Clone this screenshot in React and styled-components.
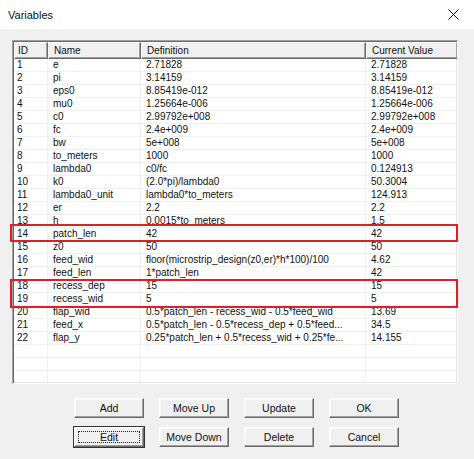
import React from 'react';
import styled, { createGlobalStyle } from 'styled-components';

const GlobalStyle = createGlobalStyle`
  html, body {
    margin: 0;
    padding: 0;
    background: #f0f0f0;
  }
`;

const ROW_H = 13;
const HEADER_H = 17;

const variables = [
  ['1', 'e', '2.71828', '2.71828'],
  ['2', 'pi', '3.14159', '3.14159'],
  ['3', 'eps0', '8.85419e-012', '8.85419e-012'],
  ['4', 'mu0', '1.25664e-006', '1.25664e-006'],
  ['5', 'c0', '2.99792e+008', '2.99792e+008'],
  ['6', 'fc', '2.4e+009', '2.4e+009'],
  ['7', 'bw', '5e+008', '5e+008'],
  ['8', 'to_meters', '1000', '1000'],
  ['9', 'lambda0', 'c0/fc', '0.124913'],
  ['10', 'k0', '(2.0*pi)/lambda0', '50.3004'],
  ['11', 'lambda0_unit', 'lambda0*to_meters', '124.913'],
  ['12', 'er', '2.2', '2.2'],
  ['13', 'h', '0.0015*to_meters', '1.5'],
  ['14', 'patch_len', '42', '42'],
  ['15', 'z0', '50', '50'],
  ['16', 'feed_wid', 'floor(microstrip_design(z0,er)*h*100)/100', '4.62'],
  ['17', 'feed_len', '1*patch_len', '42'],
  ['18', 'recess_dep', '15', '15'],
  ['19', 'recess_wid', '5', '5'],
  ['20', 'flap_wid', '0.5*patch_len - recess_wid - 0.5*feed_wid', '13.69'],
  ['21', 'feed_x', '0.5*patch_len - 0.5*recess_dep + 0.5*feed...', '34.5'],
  ['22', 'flap_y', '0.25*patch_len + 0.5*recess_wid + 0.25*fe...', '14.155'],
];

const EMPTY_ROWS = 3;

// red marks drawn over the list: first row, row count, fine offsets
const highlights = [
  { first: 14, count: 1, dy: -4, dh: 5 },
  { first: 18, count: 2, dy: -1, dh: 3 },
];

const columns = ['ID', 'Name', 'Definition', 'Current Value'];

const Window = styled.div`
  width: 474px;
  height: 459px;
  background: #f0f0f0;
  display: flex;
  flex-direction: column;
  font-family: 'Liberation Sans', Arial, sans-serif;
  color: #000;
  overflow: hidden;
`;

const TitleBar = styled.div`
  height: 29px;
  background: #fff;
  display: flex;
  align-items: center;
  justify-content: space-between;
  padding: 0 10px 0 8px;
  box-sizing: border-box;
`;

const Title = styled.span`
  font-family: 'Liberation Sans', Arial, sans-serif;
  font-size: 11px;
  color: #111;
`;

const CloseIcon = styled.svg`
  width: 11px;
  height: 11px;
  margin-right: 5px;
`;

const Body = styled.div`
  padding: 11px 16px 0 12px;
  display: flex;
  flex-direction: column;
`;

const ListFrame = styled.div`
  position: relative;
  width: 446px;
  height: 344px;
`;

const ListBox = styled.div`
  width: 100%;
  height: 100%;
  box-sizing: border-box;
  border-top: 1px solid #a0a0a0;
  border-left: 1px solid #a0a0a0;
  border-right: 1px solid #fff;
  border-bottom: 1px solid #fff;
  box-shadow: inset 1px 1px 0 #696969, inset -1px -1px 0 #e3e3e3;
  background: #fff;
  padding: 1px 1px 0 1px;
  overflow: hidden;
`;

const Grid = styled.div`
  display: grid;
  grid-template-columns: 34px 93px 225px 92px;
  grid-template-rows: ${HEADER_H}px;
  grid-auto-rows: ${ROW_H}px;
  font-size: 10px;
`;

const HeadCell = styled.div`
  box-sizing: border-box;
  background: #f0f0f0;
  border-top: 1px solid #fff;
  border-left: 1px solid #fff;
  border-right: 1px solid #696969;
  border-bottom: 1px solid #696969;
  box-shadow: inset -1px -1px 0 #a0a0a0;
  display: flex;
  align-items: center;
  padding-left: ${(p) => (p.$first ? 3 : 5)}px;
  font-size: 10px;
  color: #111;
`;

const Cell = styled.div`
  box-sizing: border-box;
  line-height: ${ROW_H - 1}px;
  border-right: 1px solid #f0f0f0;
  border-bottom: 1px solid #f0f0f0;
  padding-left: ${(p) => (p.$first ? 3 : 5)}px;
  white-space: nowrap;
  overflow: hidden;
  color: #111;
`;

const Highlight = styled.div`
  position: absolute;
  left: -2px;
  width: 448px;
  box-sizing: border-box;
  border: 2.5px solid #dc1f2c;
  pointer-events: none;
`;

const ButtonGrid = styled.div`
  display: grid;
  grid-template-columns: repeat(4, 70px);
  grid-auto-rows: 20px;
  column-gap: 15px;
  row-gap: 9px;
  margin: 14px 0 0 62px;
`;

const Button = styled.button`
  box-sizing: border-box;
  height: 20px;
  padding: 0;
  font-family: 'Liberation Sans', Arial, sans-serif;
  font-size: 10.5px;
  color: #111;
  background: #f0f0f0;
  border-top: 1px solid #fff;
  border-left: 1px solid #fff;
  border-right: 1px solid #696969;
  border-bottom: 1px solid #696969;
  box-shadow: inset -1px -1px 0 #a0a0a0, inset 1px 1px 0 #f8f8f8;
  position: relative;
  outline: ${(p) => (p.$default ? '1px solid #333' : 'none')};
  outline-offset: 0;

  &::after {
    content: '';
    display: ${(p) => (p.$default ? 'block' : 'none')};
    position: absolute;
    inset: 3px;
    border: 1px dotted #222;
  }
`;

// top of a data row, measured from the outer edge of the list frame
const rowTop = (row) => 2 + HEADER_H + (row - 1) * ROW_H;

export default function App() {
  return (
    <>
      <GlobalStyle />
      <Window>
        <TitleBar>
          <Title>Variables</Title>
          <CloseIcon viewBox="0 0 11 11">
            <path d="M0.5 0.5 L10.5 10.5 M10.5 0.5 L0.5 10.5" stroke="#111" strokeWidth="1" fill="none" />
          </CloseIcon>
        </TitleBar>
        <Body>
          <ListFrame>
            <ListBox>
              <Grid>
                {columns.map((c, i) => (
                  <HeadCell key={c} $first={i === 0}>
                    {c}
                  </HeadCell>
                ))}
                {variables.map((row) =>
                  row.map((v, i) => (
                    <Cell key={`${row[0]}-${i}`} $first={i === 0}>
                      {v}
                    </Cell>
                  ))
                )}
                {Array.from({ length: EMPTY_ROWS * 4 }).map((_, i) => (
                  <Cell key={`empty-${i}`} />
                ))}
              </Grid>
            </ListBox>
            {highlights.map((h) => (
              <Highlight
                key={h.first}
                style={{ top: rowTop(h.first) + h.dy, height: h.count * ROW_H + h.dh }}
              />
            ))}
          </ListFrame>
          <ButtonGrid>
            <Button>Add</Button>
            <Button>Move Up</Button>
            <Button>Update</Button>
            <Button>OK</Button>
            <Button $default>Edit</Button>
            <Button>Move Down</Button>
            <Button>Delete</Button>
            <Button>Cancel</Button>
          </ButtonGrid>
        </Body>
      </Window>
    </>
  );
}
